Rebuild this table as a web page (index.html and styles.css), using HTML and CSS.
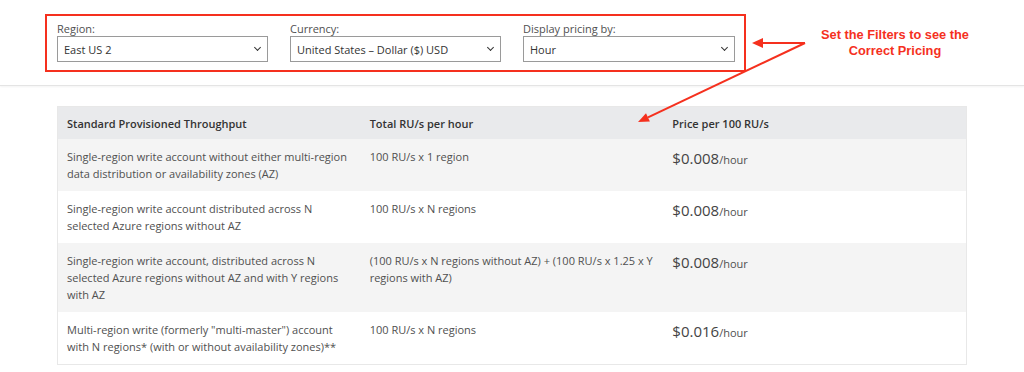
FILE: index.html
```html
<!DOCTYPE html>
<html lang="en">
<head>
  <title>Azure Cosmos DB Pricing</title>
  <link rel="stylesheet" href="styles.css">
</head>
<body>
  <div class="filters-bar">
    <div class="filters">
      <div class="filter">
        <label for="region">Region:</label>
        <div class="select-wrap">
          <select id="region">
            <option>East US 2</option>
          </select>
        </div>
      </div>
      <div class="filter">
        <label for="currency">Currency:</label>
        <div class="select-wrap">
          <select id="currency">
            <option>United States &ndash; Dollar ($) USD</option>
          </select>
        </div>
      </div>
      <div class="filter filter-wide">
        <label for="period">Display pricing by:</label>
        <div class="select-wrap">
          <select id="period">
            <option>Hour</option>
          </select>
        </div>
      </div>
    </div>
  </div>

  <div class="pricing">
    <table class="price-table">
      <thead>
        <tr>
          <th>Standard Provisioned Throughput</th>
          <th>Total RU/s per hour</th>
          <th>Price per 100 RU/s</th>
        </tr>
      </thead>
      <tbody>
        <tr>
          <td>Single-region write account without either multi-region data distribution or availability zones (AZ)</td>
          <td>100 RU/s x 1 region</td>
          <td class="cost"><span class="price">$0.008</span><span class="unit">/hour</span></td>
        </tr>
        <tr>
          <td>Single-region write account distributed across N selected Azure regions without AZ</td>
          <td>100 RU/s x N regions</td>
          <td class="cost"><span class="price">$0.008</span><span class="unit">/hour</span></td>
        </tr>
        <tr>
          <td>Single-region write account, distributed across N selected Azure regions without AZ and with Y regions with AZ</td>
          <td>(100 RU/s x N regions without AZ) + (100 RU/s x 1.25 x Y regions with AZ)</td>
          <td class="cost"><span class="price">$0.008</span><span class="unit">/hour</span></td>
        </tr>
        <tr>
          <td>Multi-region write (formerly "multi-master") account with N regions* (with or without availability zones)**</td>
          <td>100 RU/s x N regions</td>
          <td class="cost"><span class="price">$0.016</span><span class="unit">/hour</span></td>
        </tr>
      </tbody>
    </table>
  </div>

  <!-- callout pointing at the filters and the table -->
  <div class="callout">Set the Filters to see the<br>Correct Pricing</div>
  <svg class="callout-arrows" width="1024" height="372" viewBox="0 0 1024 372">
    <g fill="#f5301e" stroke="#f5301e" stroke-width="2">
      <line x1="805" y1="43" x2="762" y2="43" />
      <polygon points="752,43 763,38 763,48" stroke="none" />
      <line x1="805" y1="43" x2="648" y2="117.3" />
      <polygon points="638,122 649.9,121.4 646,113.2" stroke="none" />
    </g>
  </svg>
</body>
</html>
```

FILE: styles.css
```css
body {
  margin: 0;
  font-family: "Open Sans", "Noto Sans", Arial, sans-serif;
  font-size: 11px;
  color: #505050;
  background: #ffffff;
}

/* Filter bar */

.filters-bar {
  height: 86px;
  box-sizing: border-box;
  padding-top: 14px;
  border-bottom: 1px solid #e4e4e4;
  box-shadow: 0 1px 2px rgba(0, 0, 0, 0.05);
}

.filters {
  display: flex;
  gap: 22px;
  width: 701px;
  height: 58px;
  box-sizing: border-box;
  margin-left: 45px;
  padding: 6px 9px 8px 10px;
  border: 2px solid #f5301e;
}

.filter {
  display: flex;
  flex-direction: column;
  width: 211px;
}

.filter-wide {
  width: 212px;
}

.filter label {
  height: 14px;
  line-height: 14px;
  color: #505050;
}

.select-wrap {
  position: relative;
}

.select-wrap select {
  appearance: none;
  -webkit-appearance: none;
  width: 100%;
  height: 26px;
  margin: 0;
  padding: 0 20px 0 6px;
  border: 1px solid #9a9a9a;
  border-radius: 0;
  background: #ffffff;
  font-family: inherit;
  font-size: 11px;
  color: #333333;
}

.select-wrap::after {
  content: "";
  position: absolute;
  right: 8px;
  top: 9px;
  width: 4px;
  height: 4px;
  border-right: 1.5px solid #333333;
  border-bottom: 1.5px solid #333333;
  transform: rotate(45deg);
  pointer-events: none;
}

/* Pricing table */

.pricing {
  padding: 20px 57px 0;
}

.price-table {
  width: 910px;
  border-collapse: collapse;
  table-layout: fixed;
  border: 1px solid #e8e8e8;
}

.price-table th,
.price-table td {
  width: 33.3%;
  padding: 9px 9px;
  line-height: 17px;
  text-align: left;
  vertical-align: top;
}

.price-table th {
  padding: 8px 9px 7px;
  background: #e9eaec;
  color: #333333;
  font-weight: 600;
}

.price-table tbody tr:nth-child(odd) {
  background: #f4f4f4;
}

.price-table td.cost {
  padding-top: 11px;
  padding-bottom: 7px;
}

.price {
  font-size: 15px;
  color: #444444;
}

.unit {
  font-size: 11px;
  color: #505050;
}

/* Annotation */

.callout {
  position: absolute;
  top: 27px;
  left: 810px;
  width: 170px;
  text-align: center;
  font-family: "Liberation Sans", Arial, sans-serif;
  font-size: 12.8px;
  font-weight: bold;
  line-height: 16px;
  color: #f5301e;
}

.callout-arrows {
  position: absolute;
  top: 0;
  left: 0;
  pointer-events: none;
}
```
